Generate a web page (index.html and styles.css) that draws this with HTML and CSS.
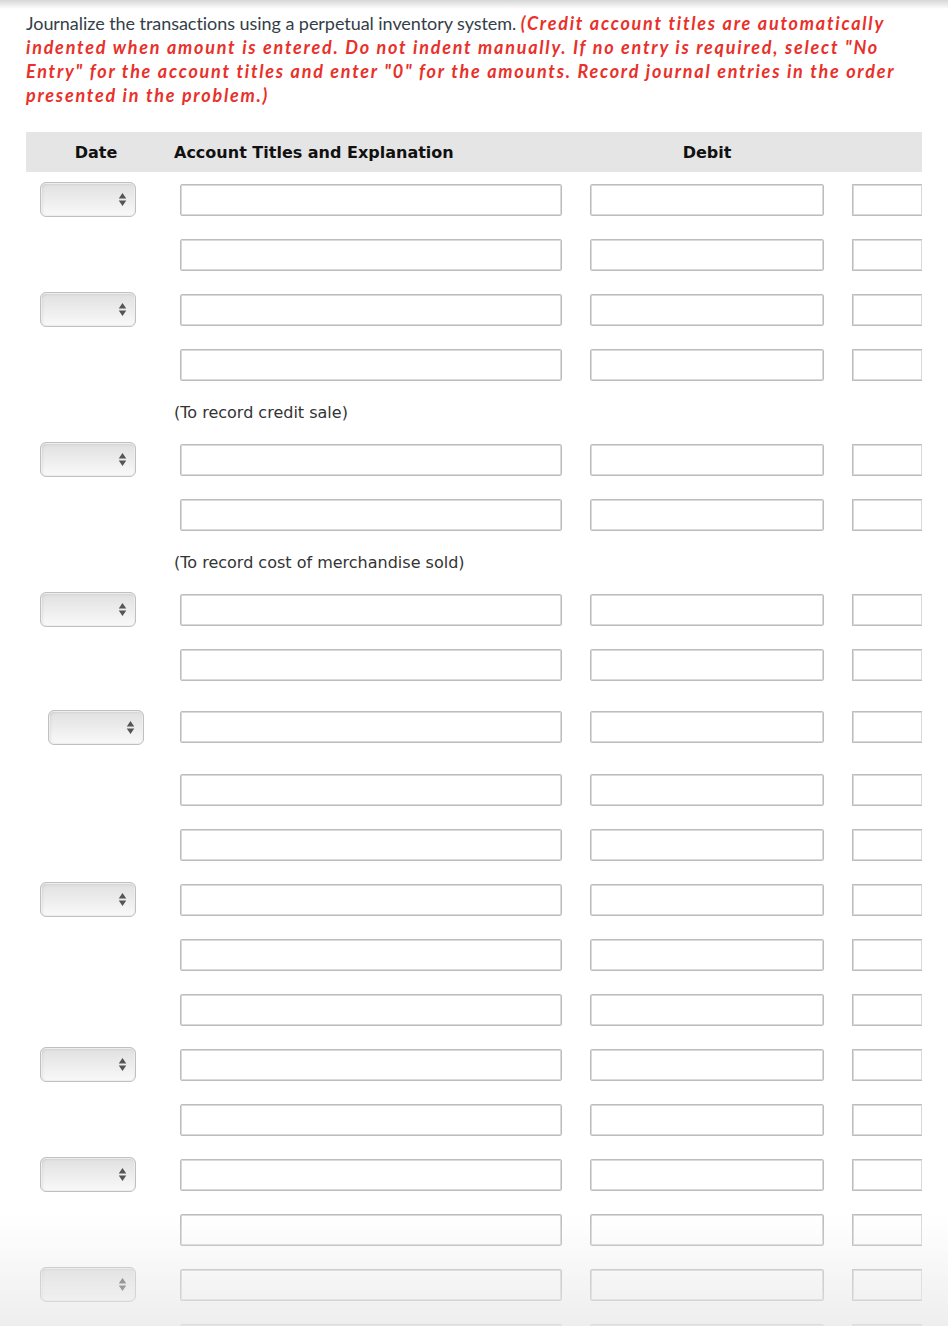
FILE: index.html
```html
<!DOCTYPE html>
<html>
<head>
<meta charset="utf-8">
<link rel="stylesheet" href="styles.css">
</head>
<body>
<div class="top-shadow"></div>
<p class="intro">Journalize the transactions using a perpetual inventory system. <em class="hint">(Credit account titles are automatically indented when amount is entered. Do not indent manually. If no entry is required, select "No Entry" for the account titles and enter "0" for the amounts. Record journal entries in the order presented in the problem.)</em></p>

<div class="journal">
  <div class="jrow head">
    <div class="c-date">Date</div>
    <div class="c-acct">Account Titles and Explanation</div>
    <div class="c-debit">Debit</div>
    <div class="c-credit">Credit</div>
  </div>

  <div class="jrow entry"><div class="c-date"><div class="sel"><svg viewBox="0 0 8 14" width="8" height="14"><path d="M4 1 L7.5 6 H0.5 Z M4 13 L7.5 8 H0.5 Z" fill="#555"/></svg></div></div><div class="c-acct"><input class="box"></div><div class="c-debit"><input class="box"></div><div class="c-credit"><input class="box"></div></div>
  <div class="jrow entry"><div class="c-date"></div><div class="c-acct"><input class="box"></div><div class="c-debit"><input class="box"></div><div class="c-credit"><input class="box"></div></div>
  <div class="jrow entry"><div class="c-date"><div class="sel"><svg viewBox="0 0 8 14" width="8" height="14"><path d="M4 1 L7.5 6 H0.5 Z M4 13 L7.5 8 H0.5 Z" fill="#555"/></svg></div></div><div class="c-acct"><input class="box"></div><div class="c-debit"><input class="box"></div><div class="c-credit"><input class="box"></div></div>
  <div class="jrow entry"><div class="c-date"></div><div class="c-acct"><input class="box"></div><div class="c-debit"><input class="box"></div><div class="c-credit"><input class="box"></div></div>
  <div class="jrow note"><div class="c-date"></div><div class="c-acct">(To record credit sale)</div></div>

  <div class="jrow entry"><div class="c-date"><div class="sel"><svg viewBox="0 0 8 14" width="8" height="14"><path d="M4 1 L7.5 6 H0.5 Z M4 13 L7.5 8 H0.5 Z" fill="#555"/></svg></div></div><div class="c-acct"><input class="box"></div><div class="c-debit"><input class="box"></div><div class="c-credit"><input class="box"></div></div>
  <div class="jrow entry"><div class="c-date"></div><div class="c-acct"><input class="box"></div><div class="c-debit"><input class="box"></div><div class="c-credit"><input class="box"></div></div>
  <div class="jrow note"><div class="c-date"></div><div class="c-acct">(To record cost of merchandise sold)</div></div>

  <div class="jrow entry"><div class="c-date"><div class="sel"><svg viewBox="0 0 8 14" width="8" height="14"><path d="M4 1 L7.5 6 H0.5 Z M4 13 L7.5 8 H0.5 Z" fill="#555"/></svg></div></div><div class="c-acct"><input class="box"></div><div class="c-debit"><input class="box"></div><div class="c-credit"><input class="box"></div></div>
  <div class="jrow entry"><div class="c-date"></div><div class="c-acct"><input class="box"></div><div class="c-debit"><input class="box"></div><div class="c-credit"><input class="box"></div></div>
  <div class="jrow entry tall"><div class="c-date"><div class="sel shift"><svg viewBox="0 0 8 14" width="8" height="14"><path d="M4 1 L7.5 6 H0.5 Z M4 13 L7.5 8 H0.5 Z" fill="#555"/></svg></div></div><div class="c-acct"><input class="box"></div><div class="c-debit"><input class="box"></div><div class="c-credit"><input class="box"></div></div>
  <div class="jrow entry"><div class="c-date"></div><div class="c-acct"><input class="box"></div><div class="c-debit"><input class="box"></div><div class="c-credit"><input class="box"></div></div>
  <div class="jrow entry"><div class="c-date"></div><div class="c-acct"><input class="box"></div><div class="c-debit"><input class="box"></div><div class="c-credit"><input class="box"></div></div>
  <div class="jrow entry"><div class="c-date"><div class="sel"><svg viewBox="0 0 8 14" width="8" height="14"><path d="M4 1 L7.5 6 H0.5 Z M4 13 L7.5 8 H0.5 Z" fill="#555"/></svg></div></div><div class="c-acct"><input class="box"></div><div class="c-debit"><input class="box"></div><div class="c-credit"><input class="box"></div></div>
  <div class="jrow entry"><div class="c-date"></div><div class="c-acct"><input class="box"></div><div class="c-debit"><input class="box"></div><div class="c-credit"><input class="box"></div></div>
  <div class="jrow entry"><div class="c-date"></div><div class="c-acct"><input class="box"></div><div class="c-debit"><input class="box"></div><div class="c-credit"><input class="box"></div></div>
  <div class="jrow entry"><div class="c-date"><div class="sel"><svg viewBox="0 0 8 14" width="8" height="14"><path d="M4 1 L7.5 6 H0.5 Z M4 13 L7.5 8 H0.5 Z" fill="#555"/></svg></div></div><div class="c-acct"><input class="box"></div><div class="c-debit"><input class="box"></div><div class="c-credit"><input class="box"></div></div>
  <div class="jrow entry"><div class="c-date"></div><div class="c-acct"><input class="box"></div><div class="c-debit"><input class="box"></div><div class="c-credit"><input class="box"></div></div>
  <div class="jrow entry"><div class="c-date"><div class="sel"><svg viewBox="0 0 8 14" width="8" height="14"><path d="M4 1 L7.5 6 H0.5 Z M4 13 L7.5 8 H0.5 Z" fill="#555"/></svg></div></div><div class="c-acct"><input class="box"></div><div class="c-debit"><input class="box"></div><div class="c-credit"><input class="box"></div></div>
  <div class="jrow entry"><div class="c-date"></div><div class="c-acct"><input class="box"></div><div class="c-debit"><input class="box"></div><div class="c-credit"><input class="box"></div></div>
  <div class="jrow entry"><div class="c-date"><div class="sel"><svg viewBox="0 0 8 14" width="8" height="14"><path d="M4 1 L7.5 6 H0.5 Z M4 13 L7.5 8 H0.5 Z" fill="#555"/></svg></div></div><div class="c-acct"><input class="box"></div><div class="c-debit"><input class="box"></div><div class="c-credit"><input class="box"></div></div>
  <div class="jrow entry"><div class="c-date"></div><div class="c-acct"><input class="box"></div><div class="c-debit"><input class="box"></div><div class="c-credit"><input class="box"></div></div>
</div>
<div class="bottom-fade"></div>
</body>
</html>
```

FILE: styles.css
```css
html, body {
  margin: 0;
  padding: 0;
  background: #fff;
  overflow: hidden;
}
body {
  padding: 11px 0 0 26px;
  width: 896px;
}
.top-shadow {
  position: fixed;
  left: 0;
  top: 0;
  width: 100%;
  height: 9px;
  background: linear-gradient(#d6d6d6, rgba(255,255,255,0));
  pointer-events: none;
}
.bottom-fade {
  position: fixed;
  left: 0;
  bottom: 0;
  width: 100%;
  height: 110px;
  background: linear-gradient(rgba(238,238,238,0), rgba(232,232,232,0.75));
  pointer-events: none;
}
.intro {
  margin: 0;
  font-family: Lato, "Open Sans", sans-serif;
  font-size: 18px;
  line-height: 24px;
  color: #343e48;
  letter-spacing: -0.05px;
}
.hint {
  font-style: italic;
  font-weight: 700;
  color: #e8312a;
  letter-spacing: 1.75px;
}
.journal {
  margin-top: 25px;
  width: 896px;
  overflow: hidden;
  font-family: "DejaVu Sans", Verdana, sans-serif;
}
.jrow {
  display: grid;
  grid-template-columns: 140px 410px 262px 84px;
  width: 896px;
}
.jrow.head {
  height: 40px;
  background: #e5e5e5;
  align-items: center;
  font-weight: 700;
  font-size: 16px;
  color: #111;
}
.head .c-date, .head .c-debit {
  text-align: center;
}
.head .c-credit {
  visibility: hidden;
}
.head .c-acct { padding-left: 8px; }
.jrow.entry {
  height: 55px;
  align-items: center;
}
.jrow.entry.tall {
  height: 70px;
}
.jrow.note {
  height: 40px;
  align-items: center;
  color: #333;
}
.note .c-acct {
  padding-left: 8px;
  font-size: 16px;
  letter-spacing: 0;
}
.entry .c-acct, .entry .c-debit {
  padding: 0 14px;
  display: flex;
}
.entry .c-credit {
  padding-left: 14px;
  display: flex;
}
.entry .c-credit .box {
  border-right: 0;
  border-radius: 1px 0 0 1px;
}
.entry .c-date {
  padding-left: 14px;
  display: flex;
}
.box {
  appearance: none;
  -webkit-appearance: none;
  box-sizing: border-box;
  width: 100%;
  height: 32px;
  margin: 0;
  border: 1px solid #bdbdbd;
  box-shadow: inset 0 0 0 1px #d9d9d9;
  border-radius: 2px;
  background: #fff;
  outline: none;
}
.sel {
  box-sizing: border-box;
  width: 96px;
  height: 35px;
  border: 1px solid #c0c0c0;
  border-radius: 6px;
  background: linear-gradient(#e0e0e0, #f9f9f9);
  box-shadow: inset 0 0 0 1px #eeeeee, inset 1px 1px 3px rgba(0,0,0,0.12);
  display: flex;
  align-items: center;
  justify-content: flex-end;
  padding-right: 8px;
}
.sel svg {
  width: 9px;
  height: 15px;
}
.sel.shift {
  margin-left: 8px;
}
```
